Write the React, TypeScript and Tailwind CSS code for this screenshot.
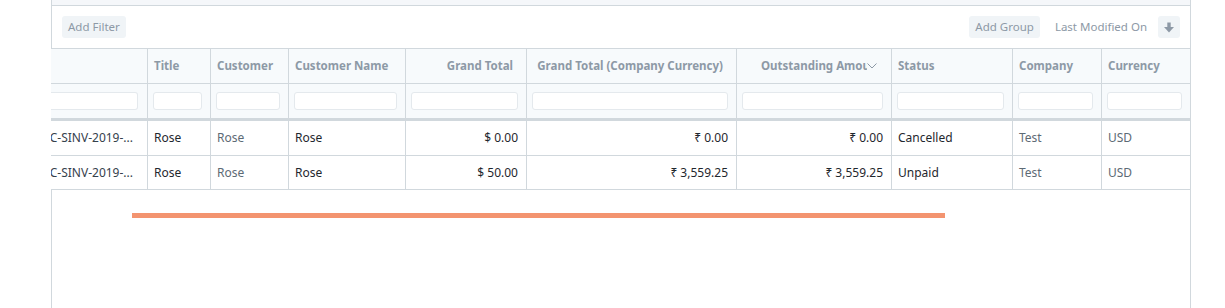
import React from "react";

const widths = [
  "w-[97px]",
  "w-[63px]",
  "w-[78px]",
  "w-[117px]",
  "w-[121px]",
  "w-[210px]",
  "w-[155px]",
  "w-[121px]",
  "w-[89px]",
  "w-[88px]",
];

const cols = [
  { label: "", align: "left" },
  { label: "Title", align: "left" },
  { label: "Customer", align: "left" },
  { label: "Customer Name", align: "left" },
  { label: "Grand Total", align: "right" },
  { label: "Grand Total (Company Currency)", align: "right" },
  { label: "Outstanding Amount", align: "right", chevron: true },
  { label: "Status", align: "left" },
  { label: "Company", align: "left" },
  { label: "Currency", align: "left" },
];

type Cell = { t: string; cls: string; right?: boolean };

const dark = "text-[#1f272e]";
const grey = "text-[#5d6a75]";

const rows: Cell[][] = [
  [
    { t: "ACC-SINV-2019-...", cls: "text-[#36414c]" },
    { t: "Rose", cls: dark },
    { t: "Rose", cls: grey },
    { t: "Rose", cls: dark },
    { t: "$ 0.00", cls: dark, right: true },
    { t: "₹ 0.00", cls: dark, right: true },
    { t: "₹ 0.00", cls: dark, right: true },
    { t: "Cancelled", cls: dark },
    { t: "Test", cls: grey },
    { t: "USD", cls: grey },
  ],
  [
    { t: "ACC-SINV-2019-...", cls: "text-[#36414c]" },
    { t: "Rose", cls: dark },
    { t: "Rose", cls: grey },
    { t: "Rose", cls: dark },
    { t: "$ 50.00", cls: dark, right: true },
    { t: "₹ 3,559.25", cls: dark, right: true },
    { t: "₹ 3,559.25", cls: dark, right: true },
    { t: "Unpaid", cls: dark },
    { t: "Test", cls: grey },
    { t: "USD", cls: grey },
  ],
];

export default function App() {
  return (
    <div className="w-[1225px] h-[308px] bg-white overflow-hidden flex flex-col font-['Noto_Sans',sans-serif] text-[12px]">
      {/* panel top */}
      <div className="ml-[51px] w-[1140px] border-l border-r border-[#d1d8dd] shrink-0">
        <div className="h-[6px] bg-[#f5f7fa] border-b border-[#d1d8dd]" />
        {/* toolbar */}
        <div className="h-[43px] border-b border-[#d1d8dd] flex items-center px-[10px] text-[11.5px]">
          <div className="h-[22px] px-[6px] rounded-[3px] bg-[#f0f4f7] text-[#8d99a6] flex items-center leading-none">
            Add Filter
          </div>
          <div className="flex-1" />
          <div className="h-[22px] px-[6px] rounded-[3px] bg-[#f0f4f7] text-[#8d99a6] flex items-center leading-none">
            Add Group
          </div>
          <div className="ml-[15px] text-[#8d99a6] leading-none">Last Modified On</div>
          <div className="ml-[11px] w-[22px] h-[22px] rounded-[3px] bg-[#f0f4f7] flex items-center justify-center">
            <svg width="10" height="11" viewBox="0 0 10 11">
              <rect x="3.3" y="0.5" width="3.4" height="5.5" fill="#8d99a6" />
              <polygon points="0,5 10,5 5,10.5" fill="#8d99a6" />
            </svg>
          </div>
        </div>
      </div>
      {/* table */}
      <div className="ml-[51px] w-[1140px] border-r border-[#d1d8dd] shrink-0 overflow-hidden">
        {/* header row */}
        <div className="flex h-[35px] bg-[#f7fafc] border-b border-[#d1d8dd]">
          {cols.map((c, i) => (
            <div
              key={i}
              className={`${widths[i]} shrink-0 h-full flex items-center font-bold text-[11.5px] text-[#8d99a6] whitespace-nowrap overflow-hidden ${
                i < cols.length - 1 ? "border-r border-[#d1d8dd]" : ""
              } ${c.align === "right" ? "justify-end pr-[13px]" : "pl-[6px]"}`}
            >
              {c.chevron ? (
                <>
                  <span className="w-[106px] overflow-hidden whitespace-nowrap">{c.label}</span>
                  <svg width="10" height="6" viewBox="0 0 10 6" className="mr-[1px] shrink-0">
                    <polyline points="0.5,0.5 5,5 9.5,0.5" fill="none" stroke="#8d99a6" strokeWidth="1" />
                  </svg>
                </>
              ) : (
                <span>{c.label}</span>
              )}
            </div>
          ))}
        </div>
        {/* filter row */}
        <div className="flex h-[37px] bg-[#f7fafc] border-b-[3px] border-[#d1d8dd]">
          {cols.map((c, i) => (
            <div
              key={i}
              className={`${widths[i]} shrink-0 h-full flex items-center ${
                i < cols.length - 1 ? "border-r border-[#d1d8dd]" : ""
              } ${i === 0 ? "pr-[9px]" : "pl-[5px] pr-[8px]"}`}
            >
              <div
                className={`h-[18px] w-full bg-white border border-[#e4e9ed] ${
                  i === 0 ? "rounded-r-[3px] border-l-0" : "rounded-[3px]"
                }`}
              />
            </div>
          ))}
        </div>
        {/* data rows */}
        {rows.map((r, ri) => (
          <div
            key={ri}
            className={`flex ${ri === 0 ? "h-[35px]" : "h-[34px]"} border-b border-[#d1d8dd] bg-white`}
          >
            {r.map((c, ci) => (
              <div
                key={ci}
                className={`${widths[ci]} shrink-0 h-full flex items-center whitespace-nowrap overflow-hidden ${c.cls} ${
                  ci < r.length - 1 ? "border-r border-[#d1d8dd]" : ""
                } ${c.right ? "justify-end pr-[8px]" : ci === 0 ? "justify-end pr-[14px]" : "pl-[6px]"}`}
              >
                <span className="shrink-0">{c.t}</span>
              </div>
            ))}
          </div>
        ))}
      </div>
      {/* empty area */}
      <div className="ml-[51px] w-[1140px] flex-1 border-l border-r border-[#d1d8dd] pt-[23px] pl-[80px]">
        <div className="w-[813px] h-[5px] bg-[#f39470]" />
      </div>
    </div>
  );
}
